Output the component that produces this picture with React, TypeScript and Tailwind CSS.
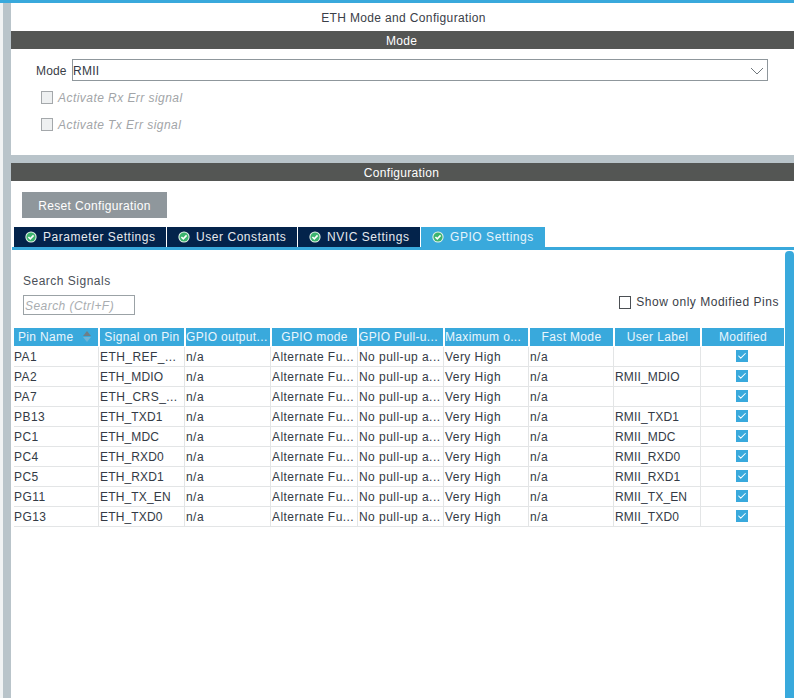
import React from 'react';
import { Check } from 'lucide-react';

const headers = ['Pin Name', 'Signal on Pin', 'GPIO output...', 'GPIO mode', 'GPIO Pull-u...', 'Maximum o...', 'Fast Mode', 'User Label', 'Modified'];

const rows = [
  ['PA1', 'ETH_REF_...', ''],
  ['PA2', 'ETH_MDIO', 'RMII_MDIO'],
  ['PA7', 'ETH_CRS_...', ''],
  ['PB13', 'ETH_TXD1', 'RMII_TXD1'],
  ['PC1', 'ETH_MDC', 'RMII_MDC'],
  ['PC4', 'ETH_RXD0', 'RMII_RXD0'],
  ['PC5', 'ETH_RXD1', 'RMII_RXD1'],
  ['PG11', 'ETH_TX_EN', 'RMII_TX_EN'],
  ['PG13', 'ETH_TXD0', 'RMII_TXD0'],
];

const tabs = [
  { label: 'Parameter Settings', width: 'w-[152px]' },
  { label: 'User Constants', width: 'w-[130px]' },
  { label: 'NVIC Settings', width: 'w-[122px]' },
  { label: 'GPIO Settings', width: 'w-[124px]', active: true },
];

const columns = 'grid-cols-[85px_86px_86px_87px_86px_85px_85px_87px_84px]';

const TabCheck = () => (
  <svg width="12" height="12" viewBox="0 0 12 12" className="shrink-0">
    <circle cx="6" cy="6" r="5.6" fill="#e8f3ec" />
    <circle cx="6" cy="6" r="4.6" fill="#3cb46e" />
    <path d="M3.4 6 5.3 7.9 8.6 4.4" fill="none" stroke="#ffffff" strokeWidth="1.6" />
  </svg>
);

const SectionHeader = ({ title }: { title: string }) => (
  <div className="h-[18px] bg-[#545654] pr-[2px] text-center text-[12px] leading-[20px] tracking-[0.3px] text-white">{title}</div>
);

const ErrOption = ({ label }: { label: string }) => (
  <div className="flex h-[27px] items-center pl-[30px]">
    <span className="h-[13px] w-[12px] border border-[#a4a8ab] bg-[#eef0f1]" />
    <span className="ml-[5px] text-[12px] italic tracking-[0.45px] text-[#a2a5a8]">{label}</span>
  </div>
);

const App = () => {
  return (
    <div className="flex h-[698px] w-[794px] flex-col overflow-hidden bg-white font-['Liberation_Sans',Arial,sans-serif] text-[#333a45]">
      <div className="h-[3px] shrink-0 bg-[#39a9dc]" />
      <div className="flex min-h-0 flex-1">
        <div className="w-[3px] shrink-0 bg-[#f1f3f4]" />
        <div className="w-[8px] shrink-0 bg-[#b9c4ca]" />
        <div className="flex min-w-0 flex-1 flex-col">
          <div className="h-[28px] pl-[2px] pt-[8px] text-center text-[12px] leading-[15px] tracking-[0.35px] text-[#3a4048]">ETH Mode and Configuration</div>
          <SectionHeader title="Mode" />

          <div className="h-[106px]">
            <div className="flex items-center pt-[10px]">
              <span className="ml-[25px] w-[36px] pt-[1px] text-[12px] tracking-[0.15px] text-[#3a4048]">Mode</span>
              <div className="flex h-[22px] w-[696px] items-center justify-between border border-[#8f979c] pr-[2px] pt-[1px] text-[12px] tracking-[0.25px] text-[#333a45]">
                <span>RMII</span>
                <svg width="14" height="8" viewBox="0 0 14 8" className="mr-[1px]">
                  <path d="M1 1 7 7 13 1" fill="none" stroke="#70777c" strokeWidth="1" />
                </svg>
              </div>
            </div>
            <div className="pt-[3px]">
              <ErrOption label="Activate Rx Err signal" />
              <ErrOption label="Activate Tx Err signal" />
            </div>
          </div>

          <div className="h-[8px] bg-[#b9c4ca]" />
          <SectionHeader title="Configuration" />

          <div className="pl-[11px] pt-[11px]">
            <div className="flex h-[26px] w-[145px] items-center justify-center bg-[#8f979c] pt-[1px] text-[12px] tracking-[0.35px] text-white">Reset Configuration</div>
          </div>

          <div className="ml-[3px] mt-[9px] flex h-[20px] gap-[1px]">
            {tabs.map((tab) => (
              <div
                key={tab.label}
                className={`flex items-center gap-[6px] pl-[11px] ${tab.width} text-[12px] tracking-[0.55px] ${tab.active ? 'bg-[#39a9dc] text-[#e6f4fb]' : 'bg-[#03234b] text-[#e6e9ee]'}`}
              >
                <TabCheck />
                <span>{tab.label}</span>
              </div>
            ))}
          </div>
          <div className="ml-[1px] h-[3px] bg-[#39a9dc]" />

          <div className="flex min-h-0 flex-1">
            <div className="min-w-0 flex-1">
              <div className="flex h-[78px] items-start justify-between pl-[12px]">
                <div className="pt-[24px]">
                  <div className="text-[12px] leading-[15px] tracking-[0.5px] text-[#4b5058]">Search Signals</div>
                  <div className="mt-[6px] flex h-[20px] w-[112px] items-center border border-[#9ba2a6] pl-[1px] pt-[1px] text-[12px] italic tracking-[0.45px] text-[#a9adb0]">Search (Ctrl+F)</div>
                </div>
                <div className="mt-[45px] flex items-center pr-[6px]">
                  <span className="h-[13px] w-[12px] border border-[#4b4f53]" />
                  <span className="ml-[5px] text-[12px] leading-[15px] tracking-[0.52px] text-[#3a4048]">Show only Modified Pins</span>
                </div>
              </div>

              <div className={`ml-[3px] grid w-[771px] ${columns}`}>
                {headers.map((header, i) => (
                  <div
                    key={header}
                    className={`relative mb-[1px] flex h-[18px] items-center bg-[#39a9dc] text-[12px] tracking-[0.35px] text-[#eaf6fc] ${i === 0 ? 'mr-[1px] justify-start pl-[4px]' : 'mx-[1px]'} ${i === 2 || i === 4 || i === 5 ? 'justify-start' : ''} ${i !== 0 && i !== 2 && i !== 4 && i !== 5 ? 'justify-center' : ''}`}
                  >
                    {header}
                    {i === 0 && (
                      <span className="absolute right-[7px] top-[3px] flex flex-col gap-[1px]">
                        <span className="h-0 w-0 border-x-[4px] border-b-[5px] border-x-transparent border-b-[#6f7f87]" />
                        <span className="h-0 w-0 border-x-[4px] border-t-[5px] border-x-transparent border-t-[#6fb4d6]" />
                      </span>
                    )}
                  </div>
                ))}
                {rows.map((row) => {
                  const cells = [row[0], row[1], 'n/a', 'Alternate Fu...', 'No pull-up a...', 'Very High', 'n/a', row[2]];
                  return (
                    <React.Fragment key={row[0]}>
                      {cells.map((cell, i) => (
                        <div
                          key={i}
                          className={`flex h-[20px] items-center overflow-hidden whitespace-nowrap border-b border-r border-[#e3e5e6] text-[12px] text-[#333a45] ${i === 0 ? 'pl-0' : 'pl-[1px]'} ${i === 7 || (i === 1 && !cell.endsWith('...')) ? 'tracking-[0.15px]' : 'tracking-[0.45px]'}`}
                        >
                          {cell}
                        </div>
                      ))}
                      <div className="flex h-[20px] items-center justify-center border-b border-[#e3e5e6] pb-[1px] pr-[2px]">
                        <span className="flex h-[12px] w-[12px] items-center justify-center bg-[#39a9dc]">
                          <Check className="h-[10px] w-[10px] text-white" strokeWidth={2.5} />
                        </span>
                      </div>
                    </React.Fragment>
                  );
                })}
              </div>
            </div>
            <div className="mt-[1px] w-[9px] shrink-0 rounded-t-[4px] bg-[#39a9dc]" />
          </div>
        </div>
      </div>
    </div>
  );
};

export default App;
